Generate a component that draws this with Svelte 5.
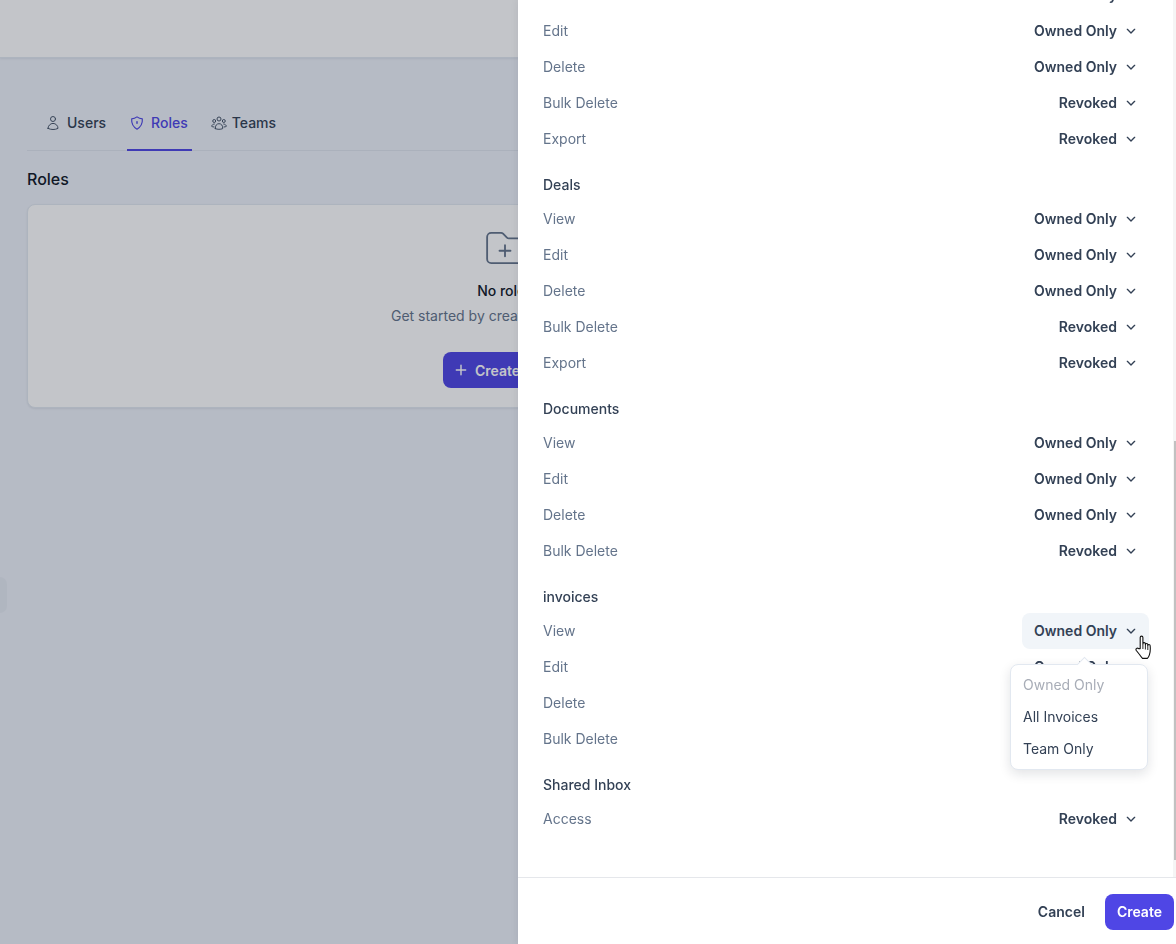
<script lang="ts">
	const sections = [
		{
			title: '',
			rows: [
				['View', 'Owned Only'],
				['Edit', 'Owned Only'],
				['Delete', 'Owned Only'],
				['Bulk Delete', 'Revoked'],
				['Export', 'Revoked']
			]
		},
		{
			title: 'Deals',
			rows: [
				['View', 'Owned Only'],
				['Edit', 'Owned Only'],
				['Delete', 'Owned Only'],
				['Bulk Delete', 'Revoked'],
				['Export', 'Revoked']
			]
		},
		{
			title: 'Documents',
			rows: [
				['View', 'Owned Only'],
				['Edit', 'Owned Only'],
				['Delete', 'Owned Only'],
				['Bulk Delete', 'Revoked']
			]
		},
		{
			title: 'invoices',
			rows: [
				['View', 'Owned Only'],
				['Edit', 'Owned Only'],
				['Delete', 'Owned Only'],
				['Bulk Delete', 'Revoked']
			]
		},
		{
			title: 'Shared Inbox',
			rows: [['Access', 'Revoked']]
		}
	];

	const options = ['Owned Only', 'All Invoices', 'Team Only'];
</script>

<div class="page">
	<header class="topbar"></header>

	<main class="content">
		<nav class="tabs">
			<a class="tab" href="#users">
				<svg width="16" height="16" viewBox="0 0 24 24" fill="none" stroke="currentColor" stroke-width="1.5">
					<path stroke-linecap="round" stroke-linejoin="round" d="M15.75 6a3.75 3.75 0 1 1-7.5 0 3.75 3.75 0 0 1 7.5 0ZM4.5 20.12a7.5 7.5 0 0 1 15 0A18 18 0 0 1 12 21.75c-2.68 0-5.22-.58-7.5-1.63Z" />
				</svg>
				Users
			</a>
			<a class="tab active" href="#roles">
				<svg width="16" height="16" viewBox="0 0 24 24" fill="none" stroke="currentColor" stroke-width="1.75">
					<path stroke-linecap="round" stroke-linejoin="round" d="M12 2.8c2.4 1.9 5 2.9 8 3 .5 6.9-2.2 12-8 15.4C6.2 17.800 3.500 12.700 4 5.800c3-.1 5.600-1.100 8-3Z" />
					<path stroke-linecap="round" d="M12 10v2.500" stroke-width="2.200" />
				</svg>
				Roles
			</a>
			<a class="tab" href="#teams">
				<svg width="16" height="16" viewBox="0 0 24 24" fill="none" stroke="currentColor" stroke-width="1.5">
					<circle cx="12" cy="6" r="3" />
					<circle cx="4.800" cy="9" r="2.200" />
					<circle cx="19.200" cy="9" r="2.200" />
					<path stroke-linecap="round" stroke-linejoin="round" d="M6.500 20.500c-.5-4.500 2-7.500 5.500-7.500s6 3 5.500 7.500c-3.500 1.300-7.500 1.300-11 0Z" />
					<path stroke-linecap="round" stroke-linejoin="round" d="M5 13.500c-2 .2-3.500 1.200-4 3.500 1 .7 2.200 1 3.500 1M19 13.500c2 .2 3.500 1.200 4 3.500-1 .7-2.200 1-3.500 1" />
				</svg>
				Teams
			</a>
		</nav>

		<h2 class="title">Roles</h2>

		<section class="card">
			<svg class="folder" width="44" height="44" viewBox="0 0 24 24" fill="none" stroke="currentColor" stroke-width="1">
				<path stroke-linecap="round" stroke-linejoin="round" d="M12 10.500v6m3-3H9m4.060-7.190-2.120-2.120a1.500 1.500 0 0 0-1.060-.44H4.500A2.250 2.250 0 0 0 2.250 6v12a2.250 2.250 0 0 0 2.250 2.250h15A2.250 2.250 0 0 0 21.750 18V9a2.250 2.250 0 0 0-2.250-2.250h-5.380a1.500 1.500 0 0 1-1.060-.44Z" />
			</svg>
			<p class="empty-title">No roles</p>
			<p class="empty-text">Get started by creating a new role.</p>
			<button class="create-role">
				<svg width="16" height="16" viewBox="0 0 24 24" fill="none" stroke="currentColor" stroke-width="2.200">
					<path stroke-linecap="round" d="M12 5v14M5 12h14" />
				</svg>
				Create Role
			</button>
		</section>
	</main>

	<div class="side-handle"></div>
</div>

<div class="overlay"></div>

<aside class="drawer">
	<div class="scroll">
		<div class="list">
			{#each sections as section}
				<div class="section">
					{#if section.title}
						<h3 class="section-title">{section.title}</h3>
					{/if}
					{#each section.rows as [label, value], i}
						{@const open = section.title === 'invoices' && i === 0}
						<div class="row">
							<span class="label">{label}</span>
							<div class="select">
								<button class="value" class:open>
									{value}
									<svg width="16" height="16" viewBox="0 0 24 24" fill="none" stroke="currentColor" stroke-width="2">
										<path stroke-linecap="round" stroke-linejoin="round" d="m6.500 11 5.500 5.500 5.500-5.500" />
									</svg>
								</button>
								{#if open}
									<div class="menu">
										{#each options as option, k}
											<div class="option" class:current={k === 0}>{option}</div>
										{/each}
									</div>
									<svg class="cursor" width="18" height="24" viewBox="0 0 18 24">
										<path fill="#fff" stroke="#111" stroke-width="1.100" stroke-linejoin="round" d="M5.200 13.800V2.600c0-2 2.700-2 2.700 0v6.200c0-1.600 2.500-1.600 2.500 0v.8c0-1.500 2.400-1.500 2.400 0v.9c0-1.400 2.300-1.400 2.300 0 .4 3.200.3 6.200-.7 9.300-.3.900-1 2.600-2 3.600H7.500c-1.100-1.200-2-2.400-3-3.900L1.300 15.500c-1.100-1.700 1-3.200 2.300-1.900Z" />
										<path fill="none" stroke="#111" stroke-width=".9" d="M7.900 9v5M10.400 9.500V14.500M12.800 10.500V15" />
									</svg>
								{/if}
							</div>
						</div>
					{/each}
				</div>
			{/each}
		</div>
		<div class="scrollbar"><div class="thumb"></div></div>
	</div>
	<footer class="footer">
		<button class="cancel">Cancel</button>
		<button class="create">Create</button>
	</footer>
</aside>

<style>
	:global(body) {
		margin: 0;
		overflow: hidden;
		background: #eef2fa;
		font-family: Inter, 'Noto Sans', sans-serif;
		font-size: 14px;
		color: #334155;
	}

	.page {
		position: relative;
		height: 944px;
	}

	.topbar {
		height: 57px;
		background: #fff;
		border-bottom: 1px solid #e2e8f0;
		box-shadow: 0 1px 2px rgba(15, 23, 42, 0.08);
	}

	.content {
		width: 956px;
		padding: 39px 27px 0;
	}

	.tabs {
		display: flex;
		gap: 18px;
		box-sizing: border-box;
		height: 54px;
		padding-left: 16px;
		border-bottom: 1px solid #dfe4ee;
	}

	.tab {
		display: flex;
		align-items: center;
		gap: 6px;
		box-sizing: border-box;
		height: 54px;
		padding: 0 3px 1px 2px;
		border-bottom: 2px solid transparent;
		font-weight: 500;
		color: #334155;
		text-decoration: none;
	}

	.tab svg {
		color: #475569;
	}

	.tab.active {
		padding-right: 4px;
		color: #4f46e5;
		border-bottom-color: #4f46e5;
	}

	.tab.active svg {
		color: #4f46e5;
	}

	.tab:last-child {
		margin-left: -1px;
		gap: 5px;
	}

	.title {
		margin: 18px 0 15px;
		font-size: 16px;
		line-height: 20px;
		font-weight: 500;
		color: #111827;
	}

	.card {
		display: flex;
		flex-direction: column;
		align-items: center;
		box-sizing: border-box;
		height: 204px;
		padding-top: 21px;
		background: #fff;
		border: 1px solid #e2e8f0;
		border-radius: 8px;
		box-shadow: 0 1px 2px rgba(15, 23, 42, 0.08);
	}

	.folder {
		color: #64748b;
	}

	.empty-title {
		margin: 11px 0 0;
		font-weight: 500;
		line-height: 20px;
		color: #111827;
	}

	.empty-text {
		margin: 5px 0 0;
		line-height: 20px;
		color: #64748b;
	}

	.create-role {
		display: flex;
		align-items: center;
		gap: 6px;
		height: 36px;
		margin-top: 26px;
		padding: 0 14px 0 10px;
		border: 0;
		border-radius: 8px;
		background: #4f46e5;
		color: #fff;
		font: 600 14px Inter, sans-serif;
	}

	.side-handle {
		position: absolute;
		left: 0;
		top: 577px;
		width: 7px;
		height: 36px;
		border-radius: 0 8px 8px 0;
		background: #e6ebf3;
	}

	.overlay {
		position: fixed;
		inset: 0;
		background: rgba(17, 24, 39, 0.25);
	}

	.drawer {
		position: fixed;
		top: 0;
		right: 0;
		bottom: 0;
		width: 658px;
		display: flex;
		flex-direction: column;
		background: #fff;
		box-shadow: 0 0 8px rgba(17, 24, 39, 0.08);
	}

	.scroll {
		position: relative;
		flex: 1;
		min-height: 0;
		overflow: hidden;
	}

	.list {
		margin-top: -23px;
		padding: 0 27px 0 25px;
	}

	.section + .section {
		margin-top: 18px;
	}

	.section-title {
		margin: 0 0 6px;
		font-size: 14px;
		line-height: 20px;
		font-weight: 500;
		color: #334155;
	}

	.row {
		display: flex;
		align-items: center;
		justify-content: space-between;
		height: 36px;
	}

	.label {
		padding-bottom: 2px;
		color: #64748b;
	}

	.select {
		position: relative;
	}

	.value {
		display: flex;
		align-items: center;
		gap: 6px;
		height: 36px;
		padding: 0 10px 2px 12px;
		border: 0;
		border-radius: 8px;
		background: transparent;
		color: #334155;
		font: 600 14px Inter, sans-serif;
	}

	.value.open {
		background: #f1f5f9;
	}

	.menu {
		position: absolute;
		z-index: 2;
		top: 51px;
		right: 1px;
		width: 138px;
		box-sizing: border-box;
		padding: 4px 0;
		background: #fff;
		border: 1px solid #e2e8f0;
		border-radius: 8px;
		box-shadow: 0 4px 12px rgba(15, 23, 42, 0.12);
	}

	.menu::before {
		content: '';
		position: absolute;
		top: -6px;
		left: 68px;
		width: 10px;
		height: 10px;
		background: #fff;
		border-top: 1px solid #e2e8f0;
		border-left: 1px solid #e2e8f0;
		transform: rotate(45deg);
	}

	.option {
		height: 32px;
		padding: 0 12px;
		line-height: 32px;
		color: #334155;
	}

	.option.current {
		color: #a8adb7;
	}

	.cursor {
		position: absolute;
		z-index: 3;
		top: 22px;
		right: -4px;
	}

	.scrollbar {
		position: absolute;
		top: 0;
		right: 0;
		bottom: 0;
		width: 3px;
		background: #f5f5f5;
	}

	.thumb {
		position: absolute;
		top: 441px;
		right: 0;
		width: 2px;
		height: 419px;
		background: #c1c1c1;
	}

	.footer {
		display: flex;
		align-items: center;
		justify-content: flex-end;
		gap: 8px;
		box-sizing: border-box;
		height: 67px;
		padding: 2px 2px 0 0;
		border-top: 1px solid #e5e7eb;
	}

	.cancel,
	.create {
		height: 36px;
		padding: 0 12px 2px;
		border: 0;
		border-radius: 8px;
		font: 600 14px Inter, sans-serif;
	}

	.cancel {
		background: transparent;
		color: #334155;
	}

	.create {
		background: #4f46e5;
		color: #fff;
	}
</style>
